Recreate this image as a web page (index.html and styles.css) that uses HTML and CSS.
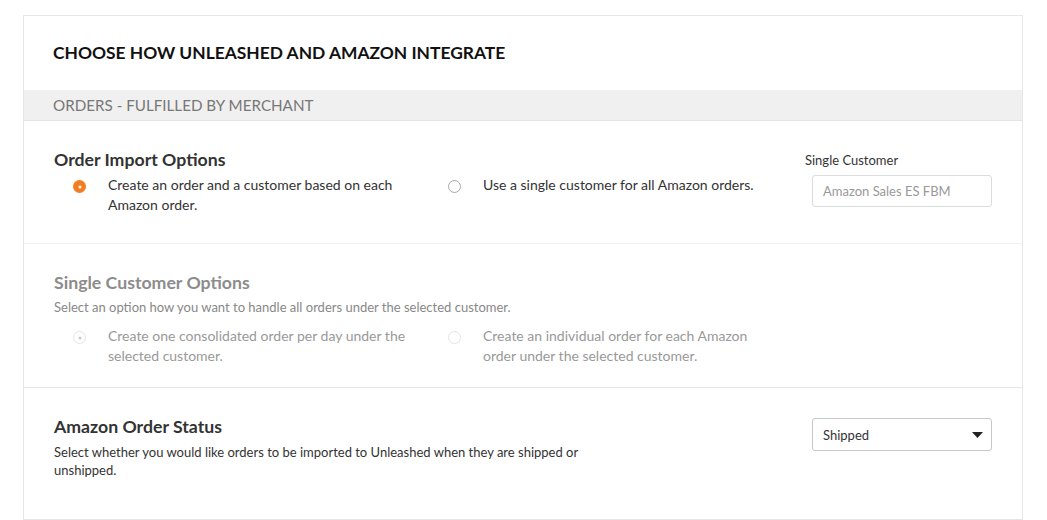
FILE: index.html
```html
<!DOCTYPE html>
<html lang="en">
<head>
<meta charset="utf-8">
<title>Amazon integration</title>
<link rel="stylesheet" href="styles.css">
</head>
<body>
<div class="card">
  <div class="card-header">
    <h1 class="card-title">Choose how Unleashed and Amazon integrate</h1>
  </div>
  <div class="band">Orders - Fulfilled by Merchant</div>

  <div class="section section-import">
    <div class="section-main">
      <h2 class="section-title">Order Import Options</h2>
      <div class="options">
        <div class="option">
          <span class="radio radio-on"></span>
          <span class="option-text">Create an order and a customer based on each Amazon order.</span>
        </div>
        <div class="option">
          <span class="radio"></span>
          <span class="option-text">Use a single customer for all Amazon orders.</span>
        </div>
      </div>
    </div>
    <div class="section-side">
      <div class="field-label">Single Customer</div>
      <div class="input"><span class="placeholder">Amazon Sales ES FBM</span></div>
    </div>
  </div>

  <div class="section section-disabled">
    <div class="section-main">
      <h2 class="section-title">Single Customer Options</h2>
      <p class="section-desc">Select an option how you want to handle all orders under the selected customer.</p>
      <div class="options">
        <div class="option">
          <span class="radio radio-dim-on"></span>
          <span class="option-text">Create one consolidated order per day under the selected customer.</span>
        </div>
        <div class="option">
          <span class="radio radio-dim"></span>
          <span class="option-text">Create an individual order for each Amazon order under the selected customer.</span>
        </div>
      </div>
    </div>
  </div>

  <div class="section section-status">
    <div class="section-main">
      <h2 class="section-title">Amazon Order Status</h2>
      <p class="section-desc status-desc">Select whether you would like orders to be imported to Unleashed when they are shipped or unshipped.</p>
    </div>
    <div class="section-side">
      <div class="select">
        <span class="select-value">Shipped</span>
        <svg class="caret" width="11" height="6" viewBox="0 0 11 6"><path d="M0 0H11L5.5 6Z" fill="#222"/></svg>
      </div>
    </div>
  </div>
</div>
</body>
</html>
```

FILE: styles.css
```css
* { box-sizing: border-box; }

html, body {
  margin: 0;
  padding: 0;
  background: #fff;
}

body {
  padding: 15px 0 0 23px;
  font-family: "Lato", "Liberation Sans", sans-serif;
  color: #333;
}

.card {
  width: 1000px;
  border: 1px solid #e6e6e6;
  background: #fff;
}

.card-header {
  height: 74px;
  display: flex;
  align-items: center;
  padding: 0 29px;
}

.card-title {
  margin: 0;
  font-size: 17.4px;
  font-weight: 700;
  text-transform: uppercase;
  color: #111;
  line-height: 20px;
}

.band {
  height: 31px;
  background: #f0f0f0;
  border-bottom: 1px solid #e4e4e4;
  padding: 0 29px;
  display: flex;
  align-items: center;
  font-size: 15.2px;
  text-transform: uppercase;
  color: #777;
}

.section {
  display: flex;
  padding: 28px 30px 28px 30px;
  border-bottom: 1px solid #f1f1f1;
}

.section-main {
  flex: 1;
  min-width: 0;
}

.section-side {
  width: 180px;
  flex-shrink: 0;
}

.section-title {
  margin: 0;
  font-size: 17.7px;
  font-weight: 700;
  line-height: 22px;
  color: #333;
}

.options {
  display: flex;
  padding-left: 19px;
  margin-top: 4px;
}

.option {
  display: flex;
  align-items: flex-start;
}

.option:first-child {
  width: 375px;
  flex-shrink: 0;
}

.radio {
  width: 13px;
  height: 13px;
  border-radius: 50%;
  border: 1px solid #a8a8a8;
  margin-top: 5px;
  flex-shrink: 0;
  position: relative;
  background: #fff;
}

.radio-on {
  border: none;
  background: #f47c20;
}

.radio-on::after,
.radio-dim-on::after {
  content: "";
  position: absolute;
  width: 3px;
  height: 3px;
  border-radius: 50%;
  left: 50%;
  top: 50%;
  transform: translate(-50%, -50%);
  background: #fff;
}

.radio-dim,
.radio-dim-on {
  border-color: #e4e4e4;
}

.radio-dim-on::after {
  background: #c8c8c8;
}

.option-text {
  margin-left: 22px;
  width: 299px;
  font-size: 14px;
  line-height: 20px;
  color: #333;
}

.field-label {
  font-size: 13px;
  line-height: 16px;
  margin: 3px 0 0 -7px;
  color: #333;
}

.input {
  margin-top: 7px;
  height: 32px;
  border: 1px solid #dcdcdc;
  border-radius: 3px;
  padding: 0 10px;
  display: flex;
  align-items: center;
}

.placeholder {
  font-size: 13px;
  color: #999;
}

.section-disabled {
  padding-bottom: 21px;
  border-bottom-color: #e6e6e6;
}

.section-disabled .section-title {
  color: #8c8c8c;
}

.section-desc {
  margin: 4px 0 0;
  font-size: 13px;
  line-height: 18px;
  color: #333;
}

.section-disabled .section-desc {
  color: #888;
}

.section-disabled .options {
  margin-top: 10px;
}

.section-disabled .option-text {
  color: #999;
}

.section-status {
  border-bottom: none;
  padding-bottom: 40px;
}

.status-desc {
  width: 560px;
  margin-top: 5px;
}

.select {
  margin-top: 2px;
  height: 33px;
  border: 1px solid #c8c8c8;
  border-radius: 3px;
  padding: 0 8px 0 10px;
  display: flex;
  align-items: center;
  justify-content: space-between;
}

.select-value {
  font-size: 13px;
  color: #333;
}

.caret {
  display: block;
}
```
